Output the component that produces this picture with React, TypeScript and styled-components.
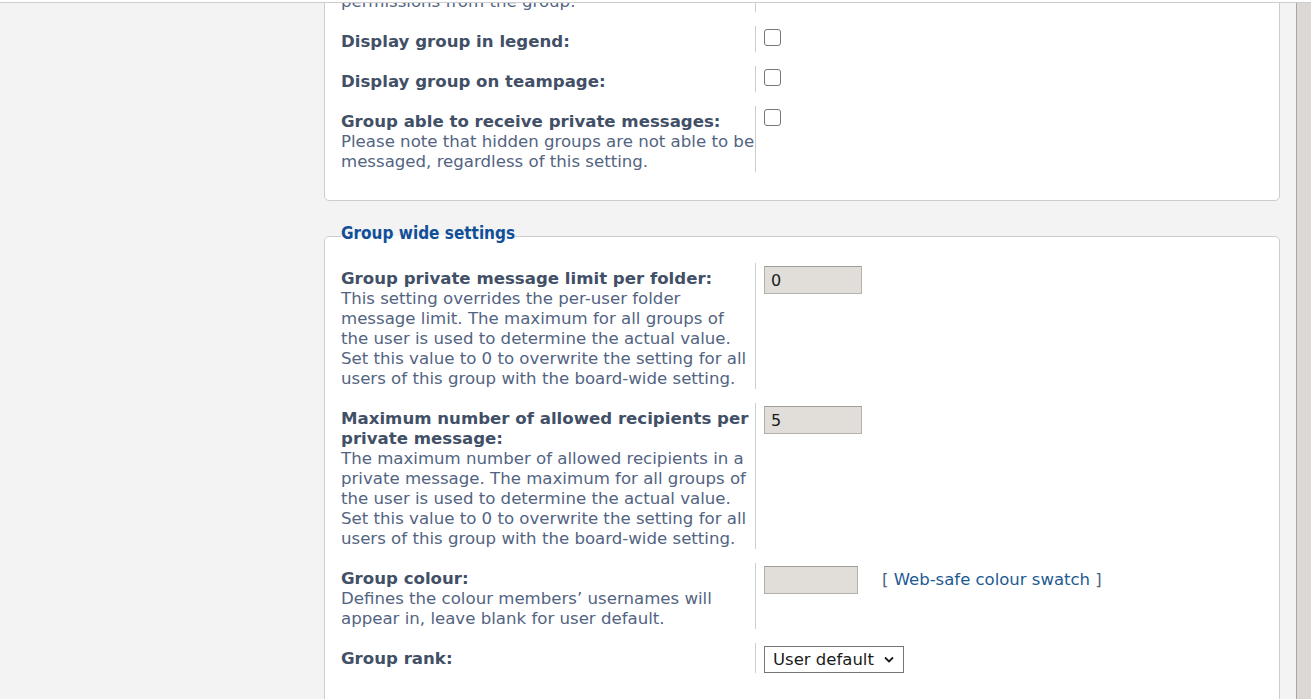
import React from "react";
import styled, { createGlobalStyle } from "styled-components";

const GlobalStyle = createGlobalStyle`
  html, body {
    margin: 0;
    padding: 0;
    height: 100%;
    overflow: hidden;
    background: #f3f3f3;
  }
  body {
    font-family: Verdana, "DejaVu Sans", sans-serif;
  }
`;

const Page = styled.div`
  display: flex;
  flex-direction: column;
  height: 100vh;
`;

const TopEdge = styled.div`
  height: 2px;
  background: #ffffff;
  border-bottom: 1px solid #cdcdcd;
  flex-shrink: 0;
`;

const Body = styled.div`
  display: flex;
  flex: 1;
  min-height: 0;
`;

const Main = styled.main`
  flex: 1;
  padding: 0 16px 0 324px;
  overflow: hidden;
  background: #f3f3f3;
`;

const ScrollStrip = styled.div`
  width: 14px;
  border-left: 1px solid #a6a6a6;
  background: #dcd9d4;
  flex-shrink: 0;
`;

const Panel = styled.div`
  margin-top: -68px;
  padding: 10px 16px 14px;
  background: #ffffff;
  border: 1px solid #cccccc;
  border-radius: 5px;
`;

const Fieldset = styled.fieldset`
  margin: 22px 0 0;
  padding: 14px 16px 15px;
  background: #ffffff;
  border: 1px solid #cccccc;
  border-radius: 5px;
  min-width: 0;
`;

const Legend = styled.legend`
  padding: 0 0 6px;
  font-family: "DejaVu Sans Condensed", Tahoma, "DejaVu Sans", sans-serif;
  font-size: 17px;
  line-height: 20px;
  font-weight: bold;
  color: #115098;
`;

const Row = styled.dl`
  display: flex;
  margin: 0 0 14px;
`;

const Term = styled.dt`
  width: 414px;
  flex-shrink: 0;
  padding-top: 6px;
  border-right: 1px solid #cccccc;
  font-size: 16.6px;
  line-height: 20px;
`;

const Label = styled.label`
  font-weight: bold;
  color: #425067;
`;

const Explain = styled.span`
  color: #536482;
`;

const Detail = styled.dd`
  margin: 0;
  padding: 3px 0 0 8px;
  display: flex;
  align-items: flex-start;
  gap: 24px;
  font-size: 16.5px;
  line-height: 20px;
`;

const Checkbox = styled.input.attrs({ type: "checkbox" })`
  appearance: none;
  margin: 0;
  width: 17px;
  height: 17px;
  border: 1.5px solid #767676;
  border-radius: 3px;
  background: #ffffff;
`;

const TextInput = styled.input<{ $w: number }>`
  box-sizing: border-box;
  width: ${(p) => p.$w}px;
  height: 28px;
  margin: 0;
  padding: 0 6px;
  border: 1px solid #b5b2ad;
  border-top-color: #a09d98;
  background: #e1deda;
  font-family: Verdana, "DejaVu Sans", sans-serif;
  font-size: 16px;
  color: #1a1a1a;
  outline: none;
`;

const SwatchLink = styled.span`
  padding-top: 4px;
  color: #536482;
  white-space: nowrap;

  a {
    color: #1d5a92;
    text-decoration: none;
  }
`;

const SelectWrap = styled.div`
  position: relative;
  width: 140px;
  height: 27px;
`;

const Select = styled.select`
  appearance: none;
  box-sizing: border-box;
  width: 100%;
  height: 100%;
  margin: 0;
  padding: 0 0 0 8px;
  border: 1px solid #767676;
  border-radius: 0;
  background: #ffffff;
  font-family: Verdana, "DejaVu Sans", sans-serif;
  font-size: 16.5px;
  color: #1a1a1a;
`;

const Chevron = styled.svg`
  position: absolute;
  right: 10px;
  top: 10px;
  pointer-events: none;
`;

type Setting = {
  label: string;
  explain?: string;
  control: React.ReactNode;
};

function SettingRow({ label, explain, control }: Setting) {
  return (
    <Row>
      <Term>
        <Label>{label}</Label>
        {explain && (
          <>
            <br />
            <Explain>{explain}</Explain>
          </>
        )}
      </Term>
      <Detail>{control}</Detail>
    </Row>
  );
}

const groupOptions: Setting[] = [
  {
    label: "Exempt group leader from permissions:",
    explain:
      "If enabled group leader no longer inherits permissions from the group.",
    control: <Checkbox />,
  },
  { label: "Display group in legend:", control: <Checkbox /> },
  { label: "Display group on teampage:", control: <Checkbox /> },
  {
    label: "Group able to receive private messages:",
    explain:
      "Please note that hidden groups are not able to be messaged, regardless of this setting.",
    control: <Checkbox />,
  },
];

const wideSettings: Setting[] = [
  {
    label: "Group private message limit per folder:",
    explain:
      "This setting overrides the per-user folder message limit. The maximum for all groups of the user is used to determine the actual value. Set this value to 0 to overwrite the setting for all users of this group with the board-wide setting.",
    control: <TextInput $w={98} defaultValue="0" />,
  },
  {
    label: "Maximum number of allowed recipients per private message:",
    explain:
      "The maximum number of allowed recipients in a private message. The maximum for all groups of the user is used to determine the actual value. Set this value to 0 to overwrite the setting for all users of this group with the board-wide setting.",
    control: <TextInput $w={98} defaultValue="5" />,
  },
  {
    label: "Group colour:",
    explain:
      "Defines the colour members\u2019 usernames will appear in, leave blank for user default.",
    control: (
      <>
        <TextInput $w={94} defaultValue="" />
        <SwatchLink>
          [ <a href="#">Web-safe colour swatch</a> ]
        </SwatchLink>
      </>
    ),
  },
  {
    label: "Group rank:",
    control: (
      <SelectWrap>
        <Select defaultValue="0">
          <option value="0">User default</option>
        </Select>
        <Chevron width="10" height="7" viewBox="0 0 10 7">
          <path
            d="M1 1.5l4 4 4-4"
            fill="none"
            stroke="#1a1a1a"
            strokeWidth="1.8"
          />
        </Chevron>
      </SelectWrap>
    ),
  },
];

export default function App() {
  return (
    <>
      <GlobalStyle />
      <Page>
        <TopEdge />
        <Body>
          <Main>
            <Panel>
              {groupOptions.map((s) => (
                <SettingRow key={s.label} {...s} />
              ))}
            </Panel>
            <Fieldset>
              <Legend>Group wide settings</Legend>
              {wideSettings.map((s) => (
                <SettingRow key={s.label} {...s} />
              ))}
            </Fieldset>
          </Main>
          <ScrollStrip />
        </Body>
      </Page>
    </>
  );
}
